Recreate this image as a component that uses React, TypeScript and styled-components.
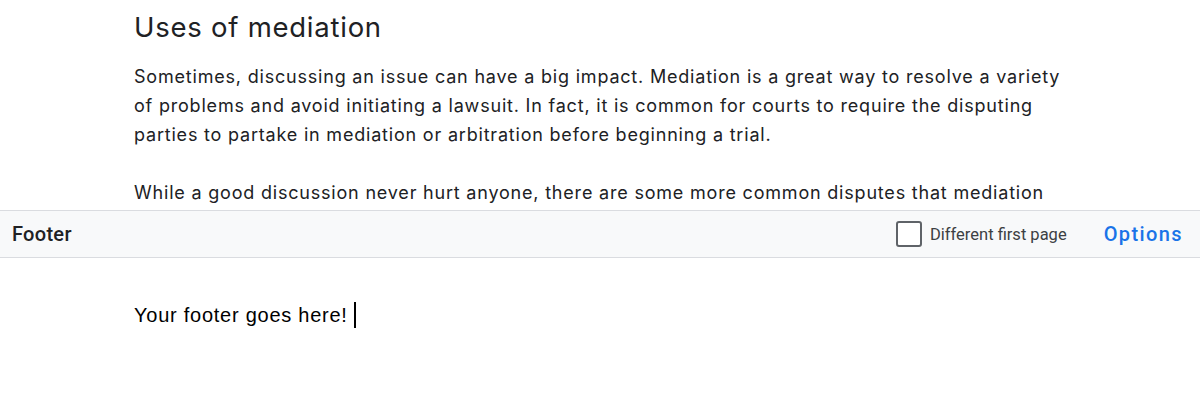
import styled, { createGlobalStyle } from "styled-components";

const GlobalStyle = createGlobalStyle`
  html, body {
    margin: 0;
    padding: 0;
    background: #fff;
  }
  body {
    font-family: Roboto, "Liberation Sans", Arial, sans-serif;
  }
`;

const Page = styled.div`
  width: 1200px;
  height: 401px;
  display: flex;
  flex-direction: column;
  overflow: hidden;
  background: #fff;
`;

const Body = styled.div`
  height: 210px;
  flex-shrink: 0;
  overflow: hidden;
  padding: 7px 0 0 134px;
  box-sizing: border-box;
`;

const Heading = styled.h2`
  margin: 0 0 15px;
  font-family: Inter, Roboto, sans-serif;
  font-size: 27.5px;
  font-weight: 400;
  line-height: 40px;
  color: #202124;
  letter-spacing: 0.75px;
`;

const Paragraph = styled.p`
  margin: 0 0 29px;
  font-family: Inter, Roboto, sans-serif;
  font-size: 18px;
  line-height: 29px;
  color: #202124;
  letter-spacing: 0.8px;
  white-space: nowrap;
`;

const Bar = styled.div`
  height: 48px;
  flex-shrink: 0;
  box-sizing: border-box;
  display: flex;
  align-items: center;
  background: #f8f9fa;
  border-top: 1px solid #dadce0;
  border-bottom: 1px solid #dadce0;
  padding: 0 17px 0 12px;
`;

const BarTitle = styled.div`
  flex: 1;
  font-family: Roboto, sans-serif;
  font-size: 20px;
  font-weight: 500;
  letter-spacing: 0.3px;
  color: #202124;
`;

const CheckLabel = styled.label`
  display: flex;
  align-items: center;
  gap: 8px;
  margin-right: 37px;
  font-family: Roboto, sans-serif;
  font-size: 16.5px;
  color: #3c4043;
`;

const Box = styled.span`
  width: 26px;
  height: 26px;
  box-sizing: border-box;
  border: 2px solid #5f6368;
  border-radius: 3px;
  background: #fff;
`;

const OptionsButton = styled.button`
  border: none;
  background: none;
  padding: 0;
  font-family: Roboto, sans-serif;
  font-size: 20px;
  font-weight: 500;
  letter-spacing: 1.4px;
  color: #1a73e8;
  cursor: pointer;
`;

const FooterArea = styled.div`
  padding: 44px 0 0 134px;
`;

const FooterText = styled.div`
  display: flex;
  align-items: center;
  font-family: "Liberation Sans", Arial, sans-serif;
  font-size: 20px;
  letter-spacing: 0.75px;
  color: #000;
`;

const Caret = styled.span`
  display: inline-block;
  width: 2.5px;
  height: 26px;
  background: #000;
  margin-left: 6px;
`;

export default function App() {
  return (
    <Page>
      <GlobalStyle />
      <Body>
        <Heading>Uses of mediation</Heading>
        <Paragraph>
          Sometimes, discussing an issue can have a big impact. Mediation is a great way to resolve a variety
          <br />
          of problems and avoid initiating a lawsuit. In fact, it is common for courts to require the disputing
          <br />
          parties to partake in mediation or arbitration before beginning a trial.
        </Paragraph>
        <Paragraph>
          While a good discussion never hurt anyone, there are some more common disputes that mediation
        </Paragraph>
      </Body>
      <Bar>
        <BarTitle>Footer</BarTitle>
        <CheckLabel>
          <Box />
          Different first page
        </CheckLabel>
        <OptionsButton>Options</OptionsButton>
      </Bar>
      <FooterArea>
        <FooterText>
          Your footer goes here!
          <Caret />
        </FooterText>
      </FooterArea>
    </Page>
  );
}
